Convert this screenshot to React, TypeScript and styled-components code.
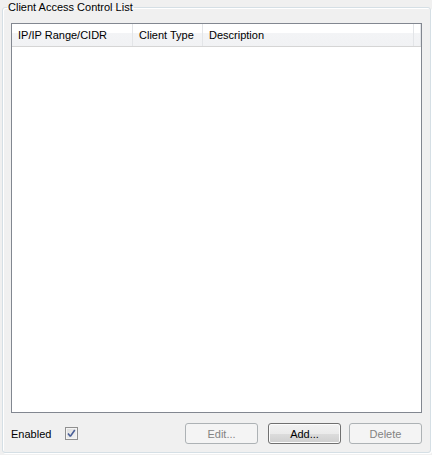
import React from 'react';
import styled, { createGlobalStyle } from 'styled-components';

const GlobalStyle = createGlobalStyle`
  html, body {
    margin: 0;
    padding: 0;
    background: #f0f0f0;
  }
  body {
    font-family: "Liberation Sans", Arial, sans-serif;
    font-size: 11px;
    color: #000;
  }
`;

const Page = styled.div`
  width: 432px;
  height: 455px;
  box-sizing: border-box;
  padding: 0 3px 0 2px;
  background: #f0f0f0;
`;

const GroupBox = styled.fieldset`
  margin: 0;
  height: 453px;
  box-sizing: border-box;
  display: flex;
  flex-direction: column;
  padding: 9px 8px 8px 8px;
  border: 1px solid #d5dfe5;
  border-radius: 3px;
  box-shadow: inset 1px 1px 0 #fff, 1px 1px 0 #fff;
`;

const Legend = styled.legend`
  padding: 0 1px;
  margin-left: -4px;
  line-height: 14px;
  font-size: 11px;
  color: #000;
`;

const ListView = styled.div`
  flex: 1;
  background: #fff;
  border: 1px solid #828790;
  display: flex;
  flex-direction: column;
`;

const HeaderRow = styled.div`
  display: flex;
  height: 22px;
  background: linear-gradient(#ffffff 0%, #ffffff 40%, #f3f4f6 41%, #f1f2f4 100%);
  border-bottom: 1px solid #d5d5d5;
`;

const HeaderCell = styled.div<{ w?: number }>`
  ${p => (p.w ? `width: ${p.w}px;` : 'flex: 1;')}
  box-sizing: border-box;
  padding-left: 6px;
  display: flex;
  align-items: center;
  border-right: 1px solid #e3e5e8;
  white-space: nowrap;
`;

const Footer = styled.div`
  display: flex;
  align-items: center;
  margin-top: 10px;
  height: 21px;
`;

const CheckLabel = styled.span`
  width: 54px;
`;

const CheckBox = styled.span`
  width: 13px;
  height: 13px;
  box-sizing: border-box;
  border: 1px solid #8f8f8f;
  background: linear-gradient(135deg, #dcdcdc, #f4f4f4);
  box-shadow: inset 0 0 0 1px #f4f4f4;
  display: flex;
  align-items: center;
  justify-content: center;
`;

const Spacer = styled.div`
  flex: 1;
`;

const Button = styled.button<{ disabled?: boolean; gap?: number }>`
  width: 73px;
  height: 21px;
  margin-left: ${p => p.gap ?? 0}px;
  box-sizing: border-box;
  font-family: "Liberation Sans", Arial, sans-serif;
  font-size: 11px;
  border-radius: 3px;
  padding: 0;
  border: 1px solid ${p => (p.disabled ? '#adb2b5' : '#707070')};
  color: ${p => (p.disabled ? '#838383' : '#000')};
  background: ${p =>
    p.disabled
      ? '#f4f4f4'
      : 'linear-gradient(#f2f2f2 0%, #ebebeb 50%, #dddddd 51%, #cfcfcf 100%)'};
  box-shadow: inset 0 0 0 1px ${p => (p.disabled ? '#f4f4f4' : '#fcfcfc')};
`;

const columns = [
  { label: 'IP/IP Range/CIDR', w: 121 },
  { label: 'Client Type', w: 70 },
  { label: 'Description', w: 211 },
];

export default function App() {
  return (
    <Page>
      <GlobalStyle />
      <GroupBox>
        <Legend>Client Access Control List</Legend>
        <ListView>
          <HeaderRow>
            {columns.map(c => (
              <HeaderCell key={c.label} w={c.w}>{c.label}</HeaderCell>
            ))}
            <HeaderCell />
          </HeaderRow>
        </ListView>
        <Footer>
          <CheckLabel>Enabled</CheckLabel>
          <CheckBox>
            <svg width="9" height="9" viewBox="0 0 9 9">
              <path d="M1 4.5 L3 7 L3.6 7 L7.8 1" fill="none" stroke="#4a5f97" strokeWidth="1.6" />
            </svg>
          </CheckBox>
          <Spacer />
          <Button disabled>Edit...</Button>
          <Button gap={10}>Add...</Button>
          <Button disabled gap={8}>Delete</Button>
        </Footer>
      </GroupBox>
    </Page>
  );
}
